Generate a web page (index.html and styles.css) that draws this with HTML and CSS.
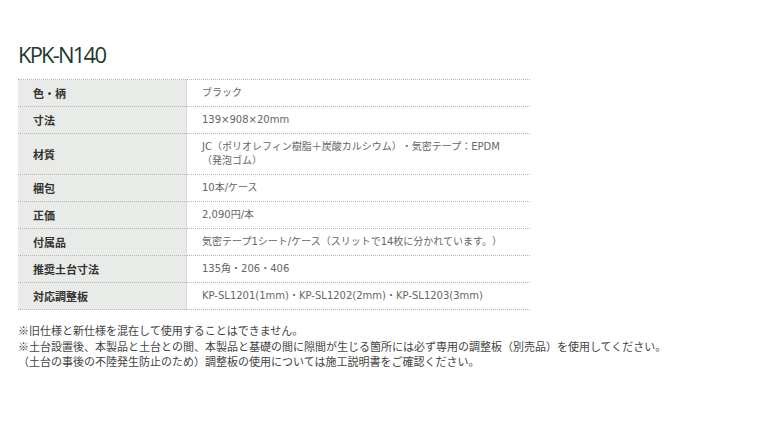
FILE: index.html
```html
<!DOCTYPE html>
<html lang="ja">

<head>
    <meta charset="UTF-8">
    <meta name="viewport" content="width=device-width, initial-scale=1.0">
    <title>KPK-N140</title>
    <link rel="stylesheet" href="styles.css">
</head>

<body>
    <div class="produto">
        <h2 class="titulo">KPK-N140</h2>
        <table class="spec">
            <tr>
                <th>色・柄</th>
                <td>ブラック</td>
            </tr>
            <tr>
                <th>寸法</th>
                <td>139×908×20mm</td>
            </tr>
            <tr>
                <th>材質</th>
                <td>JC（ポリオレフィン樹脂＋炭酸カルシウム）・気密テープ：EPDM<br>（発泡ゴム）</td>
            </tr>
            <tr>
                <th>梱包</th>
                <td>10本/ケース</td>
            </tr>
            <tr>
                <th>正価</th>
                <td>2,090円/本</td>
            </tr>
            <tr>
                <th>付属品</th>
                <td>気密テープ1シート/ケース（スリットで14枚に分かれています。）</td>
            </tr>
            <tr>
                <th>推奨土台寸法</th>
                <td>135角・206・406</td>
            </tr>
            <tr>
                <th>対応調整板</th>
                <td>KP-SL1201(1mm)・KP-SL1202(2mm)・KP-SL1203(3mm)</td>
            </tr>
        </table>
        <p class="notas">
            ※旧仕様と新仕様を混在して使用することはできません。<br>
            ※土台設置後、本製品と土台との間、本製品と基礎の間に隙間が生じる箇所には必ず専用の調整板（別売品）を使用してください。<br>
            （土台の事後の不陸発生防止のため）調整板の使用については施工説明書をご確認ください。
        </p>
    </div>
</body>

</html>
```

FILE: styles.css
```css
body {
    margin: 0;
    font-family: "DejaVu Sans", "Noto Sans CJK JP", sans-serif;
    background-color: #fff;
    text-spacing-trim: space-all;
}

.produto {
    padding: 41px 18px 0;
}

.titulo {
    margin: 0 0 12px;
    font-family: "Open Sans", sans-serif;
    font-size: 22px;
    font-weight: 400;
    line-height: 26px;
    letter-spacing: -1.8px;
    color: #213a2c;
}

.spec {
    width: 512px;
    border-collapse: collapse;
    border-top: 1px dotted #b5b5b5;
}

.spec th,
.spec td {
    padding: 6px 15px;
    line-height: 14px;
    text-align: left;
    vertical-align: middle;
    border-bottom: 1px dotted #b5b5b5;
}

.spec th {
    width: 138px;
    font-family: "Noto Sans CJK JP", sans-serif;
    font-size: 11px;
    font-weight: 700;
    color: #333;
    background-color: #e9ebe9;
    border-right: 1px dotted #c8c8c8;
}

.spec td {
    font-size: 10px;
    color: #666;
}

.notas {
    margin: 13px 0 0;
    font-family: "Noto Sans CJK JP", sans-serif;
    font-size: 11px;
    line-height: 15.5px;
    color: #444;
}
```
